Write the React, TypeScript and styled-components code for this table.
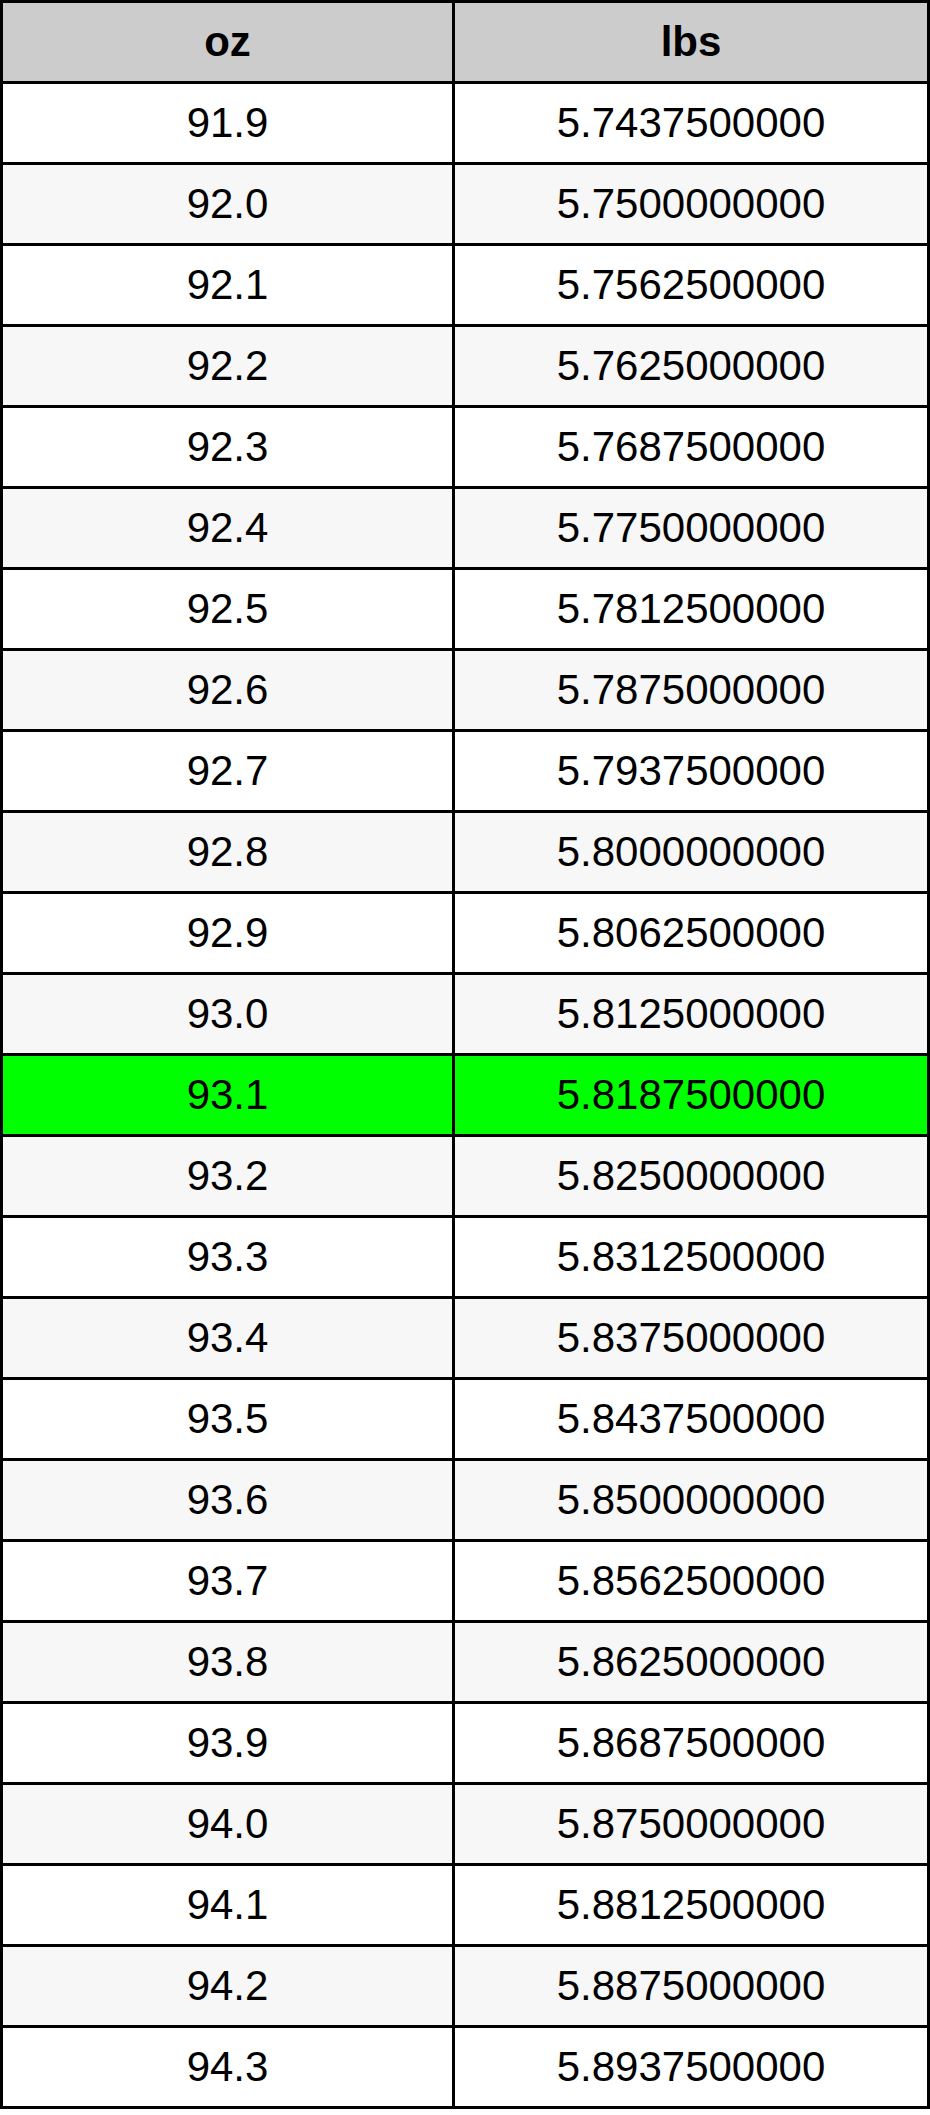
import styled, {createGlobalStyle} from 'styled-components';

const GlobalStyle = createGlobalStyle`
    body {
        margin: 0;
        background: #fff;
        font-family: "Liberation Sans", Arial, sans-serif;
    }
`;

const rows: [string, string][] = [
    ['91.9', '5.7437500000'],
    ['92.0', '5.7500000000'],
    ['92.1', '5.7562500000'],
    ['92.2', '5.7625000000'],
    ['92.3', '5.7687500000'],
    ['92.4', '5.7750000000'],
    ['92.5', '5.7812500000'],
    ['92.6', '5.7875000000'],
    ['92.7', '5.7937500000'],
    ['92.8', '5.8000000000'],
    ['92.9', '5.8062500000'],
    ['93.0', '5.8125000000'],
    ['93.1', '5.8187500000'],
    ['93.2', '5.8250000000'],
    ['93.3', '5.8312500000'],
    ['93.4', '5.8375000000'],
    ['93.5', '5.8437500000'],
    ['93.6', '5.8500000000'],
    ['93.7', '5.8562500000'],
    ['93.8', '5.8625000000'],
    ['93.9', '5.8687500000'],
    ['94.0', '5.8750000000'],
    ['94.1', '5.8812500000'],
    ['94.2', '5.8875000000'],
    ['94.3', '5.8937500000'],
];

const HIGHLIGHT = '93.1';

type Tone = 'head' | 'plain' | 'alt' | 'hit';

const toneColors: Record<Tone, string> = {
    head: '#cccccc',
    plain: '#ffffff',
    alt: '#f7f7f7',
    hit: '#00ff00',
};

const App = () => (
    <>
        <GlobalStyle />
        <StyledTable>
            <StyledCell $tone="head" $bold>oz</StyledCell>
            <StyledCell $tone="head" $bold>lbs</StyledCell>
            {rows.map(([oz, lbs], i) => {
                const tone: Tone = oz === HIGHLIGHT ? 'hit' : i % 2 ? 'alt' : 'plain';
                return [
                    <StyledCell key={`${oz}-a`} $tone={tone}>{oz}</StyledCell>,
                    <StyledCell key={`${oz}-b`} $tone={tone}>{lbs}</StyledCell>,
                ];
            })}
        </StyledTable>
    </>
);

export default App;

const StyledTable = styled.div`
    display: grid;
    grid-template-columns: 449px 472px;
    grid-auto-rows: 78px;
    gap: 3px;
    padding: 3px;
    width: 930px;
    box-sizing: border-box;
    background: #000;
`;

const StyledCell = styled.div<{$tone: Tone; $bold?: boolean}>`
    display: flex;
    align-items: center;
    justify-content: center;
    background: ${({$tone}) => toneColors[$tone]};
    color: #000;
    font-size: 42px;
    font-weight: ${({$bold}) => ($bold ? 700 : 400)};
    line-height: 1;
`;
